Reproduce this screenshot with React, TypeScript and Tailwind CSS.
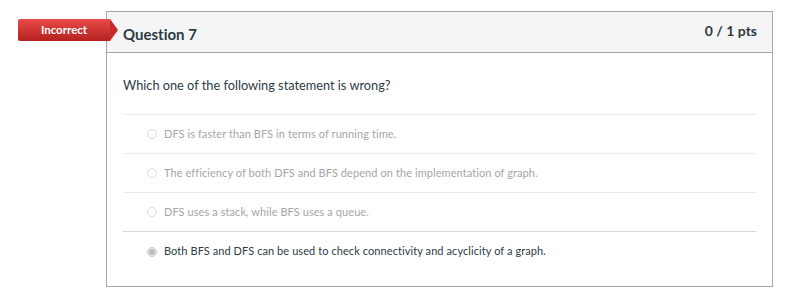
const answers = [
  { text: 'DFS is faster than BFS in terms of running time.', selected: false },
  { text: 'The efficiency of both DFS and BFS depend on the implementation of graph.', selected: false },
  { text: 'DFS uses a stack, while BFS uses a queue.', selected: false },
  { text: 'Both BFS and DFS can be used to check connectivity and acyclicity of a graph.', selected: true },
];

function Radio({ checked }: { checked: boolean }) {
  return (
    <span
      className={`flex h-[10px] w-[10px] shrink-0 items-center justify-center rounded-full border ${
        checked ? 'border-[#c8c8c8] bg-[#e6e6e6]' : 'border-[#dcdcdc] bg-white'
      }`}
    >
      {checked && <span className="h-[6px] w-[6px] rounded-full bg-[#bdbdbd]" />}
    </span>
  );
}

export default function App() {
  return (
    <div className="h-[297px] w-[793px] bg-white pt-[11px] font-['Lato','Liberation_Sans',sans-serif] [font-variant-ligatures:none]">
      <div className="relative ml-[106px] w-[667px] border border-[#a8a8a8] bg-white">
        {/* incorrect badge */}
        <div className="absolute left-[-89px] top-[7px] flex h-[22px] items-center">
          <div className="flex h-[22px] w-[92px] items-center justify-center rounded-l-[2px] bg-gradient-to-b from-[#e84a48] to-[#b52020] text-[11.5px] font-bold text-white">
            Incorrect
          </div>
          <div className="h-0 w-0 border-y-[11px] border-l-[8px] border-y-transparent border-l-[#c42b2a]" />
        </div>

        <div className="flex h-[41px] items-start justify-between border-b border-[#a8a8a8] bg-[#f5f5f5] pl-4 pr-[15px]">
          <div className="pt-[12px] text-[15px] font-bold leading-5 text-[#2d3b45]">Question 7</div>
          <div className="pt-[9px] text-[14px] font-bold leading-5 text-[#2d3b45]">0 / 1 pts</div>
        </div>

        <div className="px-4 pb-[15px]">
          <div className="flex h-[62px] items-center border-b border-[#ececec] pt-[4px] text-[12.75px] text-[#2d3b45]">
            Which one of the following statement is wrong?
          </div>
          {answers.map((a, i) => (
            <div
              key={i}
              className={`flex h-[39px] items-center gap-[7px] pl-[24px] text-[11px] tracking-[0.08px] ${
                i < answers.length - 1 ? 'border-b' : ''
              } ${i === answers.length - 2 ? 'border-[#d6d6d6]' : 'border-[#ececec]'} ${
                a.selected ? 'text-[#2d3b45]' : 'text-[#a6a6a6]'
              }`}
            >
              <Radio checked={a.selected} />
              <span>{a.text}</span>
            </div>
          ))}
        </div>
      </div>
    </div>
  );
}
